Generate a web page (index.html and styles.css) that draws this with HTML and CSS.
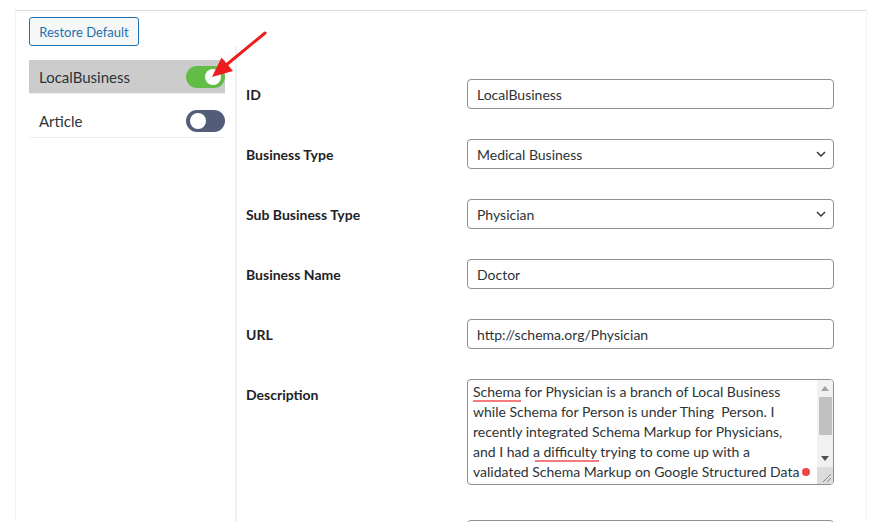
FILE: index.html
```html
<!DOCTYPE html>
<html lang="en">
<head>
<meta charset="utf-8">
<title>Schema types</title>
<link rel="stylesheet" href="styles.css">
</head>
<body>
<div class="panel">
  <div class="toolbar">
    <button class="btn" type="button">Restore Default</button>
  </div>
  <div class="layout">
    <ul class="types">
      <li class="type active"><span>LocalBusiness</span><span class="switch on"><span class="knob"></span></span></li>
      <li class="type"><span>Article</span><span class="switch"><span class="knob"></span></span></li>
    </ul>
    <div class="fields">
      <div class="row">
        <div class="label">ID</div>
        <div class="input"><span>LocalBusiness</span></div>
      </div>
      <div class="row">
        <div class="label">Business Type</div>
        <div class="input select"><span>Medical Business</span>
          <svg class="chev" width="10" height="6" viewBox="0 0 10 6"><path d="M1 1 L5 5 L9 1" fill="none" stroke="#2c3338" stroke-width="1.4"/></svg>
        </div>
      </div>
      <div class="row">
        <div class="label">Sub Business Type</div>
        <div class="input select"><span>Physician</span>
          <svg class="chev" width="10" height="6" viewBox="0 0 10 6"><path d="M1 1 L5 5 L9 1" fill="none" stroke="#2c3338" stroke-width="1.4"/></svg>
        </div>
      </div>
      <div class="row">
        <div class="label">Business Name</div>
        <div class="input"><span>Doctor</span></div>
      </div>
      <div class="row">
        <div class="label">URL</div>
        <div class="input"><span>http://schema.org/Physician</span></div>
      </div>
      <div class="row tall">
        <div class="label">Description</div>
        <div class="textarea">
          <div class="ta-text">Schema for Physician is a branch of Local Business
while Schema for Person is under Thing  Person. I
recently integrated Schema Markup for Physicians,
and I had a difficulty trying to come up with a
validated Schema Markup on Google Structured Data</div>
          <div class="scrollbar">
            <div class="sb-btn"><svg width="8" height="5" viewBox="0 0 8 5"><path d="M0 5 L4 0 L8 5 Z" fill="#a3a3a3"/></svg></div>
            <div class="sb-thumb"></div>
            <div class="sb-track"></div>
            <div class="sb-btn"><svg width="8" height="5" viewBox="0 0 8 5"><path d="M0 0 L4 5 L8 0 Z" fill="#505050"/></svg></div>
            <div class="sb-corner"><svg width="16" height="17" viewBox="0 0 16 17"><path d="M6 15 L14 7 M10 15 L14 11" stroke="#8a8a8a" stroke-width="1"/></svg></div>
          </div>
          <span class="squiggle sq-1"></span>
          <span class="squiggle sq-2"></span>
          <span class="marker"></span>
        </div>
      </div>
      <div class="row">
        <div class="label"></div>
        <div class="input"></div>
      </div>
    </div>
  </div>
</div>
<svg class="arrow" width="886" height="522" viewBox="0 0 886 522">
  <line x1="265" y1="33" x2="225" y2="66" stroke="#ee1c1c" stroke-width="3" stroke-linecap="round"/>
  <polygon points="212,77 221.5,57.5 233,71" fill="#ee1c1c"/>
</svg>
</body>
</html>
```

FILE: styles.css
```css
* {
  box-sizing: border-box;
}

html,
body {
  margin: 0;
  height: 100%;
  overflow: hidden;
  background: #ffffff;
}

body {
  position: relative;
  font-family: Lato, "Liberation Sans", sans-serif;
  font-size: 14px;
  color: #2c3338;
}

.panel {
  margin: 10px 19px 0 15px;
  height: 512px;
  overflow: hidden;
  border-top: 1px solid #dcdcde;
  border-left: 1px solid #f4f4f4;
  border-right: 1px solid #f4f4f4;
  display: flex;
  flex-direction: column;
}

.toolbar {
  padding: 6px 0 0 13px;
}

.btn {
  display: block;
  width: 110px;
  height: 29px;
  padding: 0;
  border: 1px solid #2271b1;
  border-radius: 3px;
  background: #f6f7f7;
  color: #2271b1;
  font-family: Lato, "Liberation Sans", sans-serif;
  font-size: 13px;
}

.layout {
  flex: 1;
  display: flex;
  align-items: stretch;
}

.types {
  list-style: none;
  flex: none;
  width: 196px;
  margin: 14px 10px 0 13px;
  padding: 0;
}

.type {
  display: flex;
  align-items: center;
  justify-content: space-between;
  height: 34px;
  padding-left: 10px;
  border-bottom: 1px solid #eeeeee;
  color: #2c3338;
  font-size: 15px;
}

.type + .type {
  margin-top: 10px;
}

.type.active {
  background: #cccccc;
}

.switch {
  width: 39px;
  height: 22px;
  border-radius: 11px;
  background: #535d7a;
  display: flex;
  align-items: center;
  padding: 0 4px;
}

.switch.on {
  background: #62bd46;
  justify-content: flex-end;
}

.knob {
  width: 16px;
  height: 16px;
  border-radius: 50%;
  background: #ffffff;
}

.fields {
  flex: 1;
  border-left: 2px solid #f0f0f0;
  padding: 18px 0 0 9px;
}

.row {
  display: flex;
  padding: 15px 0;
}

.row.tall {
  padding-bottom: 20px;
}

.label {
  flex: none;
  width: 221px;
  height: 30px;
  line-height: 32px;
  font-weight: 700;
  color: #1d2327;
}

.input {
  width: 367px;
  height: 30px;
  border: 1px solid #8c8f94;
  border-radius: 4px;
  padding: 0 7px 0 9px;
  display: flex;
  align-items: center;
  justify-content: space-between;
  color: #2c3338;
}

.textarea {
  position: relative;
  width: 367px;
  height: 106px;
  border: 1px solid #8c8f94;
  border-radius: 4px;
  display: flex;
  overflow: hidden;
}

.ta-text {
  flex: 1;
  padding: 2px 0 0 5px;
  line-height: 20px;
  white-space: pre;
  overflow: hidden;
  color: #2c3338;
}

.squiggle {
  position: absolute;
  height: 2px;
  background: #f47c7c;
}

.sq-1 {
  left: 5px;
  top: 20px;
  width: 48px;
}

.sq-2 {
  left: 67px;
  top: 80px;
  width: 64px;
}

.scrollbar {
  flex: none;
  width: 16px;
  background: #f1f1f1;
  display: flex;
  flex-direction: column;
}

.sb-btn {
  height: 17px;
  display: flex;
  align-items: center;
  justify-content: center;
}

.sb-thumb {
  height: 38px;
  margin: 0 1px 0 2px;
  background: #c1c1c1;
}

.sb-track {
  flex: 1;
}

.sb-corner {
  height: 17px;
  background: #dcdcdc;
}

.sb-corner svg {
  display: block;
}

.marker {
  position: absolute;
  left: 334px;
  top: 88px;
  width: 8px;
  height: 8px;
  border-radius: 50%;
  background: #ef4646;
}

.arrow {
  position: absolute;
  top: 0;
  left: 0;
  pointer-events: none;
}
```
